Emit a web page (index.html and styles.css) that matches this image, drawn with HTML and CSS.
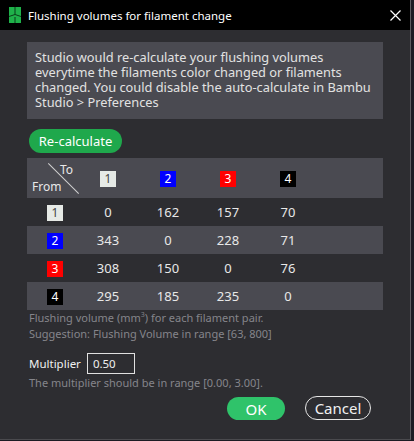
FILE: index.html
```html
<!DOCTYPE html>
<html lang="en">
<head>
  <meta charset="UTF-8" />
  <meta name="viewport" content="width=device-width, initial-scale=1.0"/>
  <title>Flushing volumes for filament change</title>
  <link rel="stylesheet" href="styles.css">
</head>
<body>

  <div class="dialog">
    <div class="titlebar">
      <svg class="logo" width="12" height="16" viewBox="0 0 12 16">
        <rect x="0" y="0" width="12" height="16" fill="#1fb24a"/>
        <path d="M0 9.5 L6 7.5 L12 9.5 M6 0 V7.5 M6 10 V16" stroke="#0b3d1a" stroke-width="1" fill="none"/>
      </svg>
      <span class="title">Flushing volumes for filament change</span>
      <svg class="close" width="11" height="11" viewBox="0 0 11 11">
        <path d="M0.5 0.5 L10.5 10.5 M10.5 0.5 L0.5 10.5" stroke="#fff" stroke-width="1.2"/>
      </svg>
    </div>

    <div class="content">
      <div class="info">
        Studio would re-calculate your flushing volumes everytime the filaments color changed or filaments changed. You could disable the auto-calculate in Bambu Studio &gt; Preferences
      </div>

      <button class="btn-recalc">Re-calculate</button>

      <div class="matrix">
        <div class="row head">
          <div class="cell corner">
            <span class="to">To</span>
            <span class="from">From</span>
          </div>
          <div class="cell"><span class="swatch c1">1</span></div>
          <div class="cell"><span class="swatch c2">2</span></div>
          <div class="cell"><span class="swatch c3">3</span></div>
          <div class="cell"><span class="swatch c4">4</span></div>
        </div>
        <div class="row">
          <div class="cell first"><span class="swatch c1">1</span></div>
          <div class="cell">0</div><div class="cell">162</div><div class="cell">157</div><div class="cell">70</div>
        </div>
        <div class="row alt">
          <div class="cell first"><span class="swatch c2">2</span></div>
          <div class="cell">343</div><div class="cell">0</div><div class="cell">228</div><div class="cell">71</div>
        </div>
        <div class="row">
          <div class="cell first"><span class="swatch c3">3</span></div>
          <div class="cell">308</div><div class="cell">150</div><div class="cell">0</div><div class="cell">76</div>
        </div>
        <div class="row alt">
          <div class="cell first"><span class="swatch c4">4</span></div>
          <div class="cell">295</div><div class="cell">185</div><div class="cell">235</div><div class="cell">0</div>
        </div>
      </div>

      <div class="note">
        Flushing volume (mm<sup>3</sup>) for each filament pair.<br>
        Suggestion: Flushing Volume in range [63, 800]
      </div>

      <div class="multiplier">
        <label for="mult">Multiplier</label>
        <input type="text" id="mult" value="0.50">
      </div>
      <div class="note range">The multiplier should be in range [0.00, 3.00].</div>

      <div class="actions">
        <button class="btn-ok">OK</button>
        <button class="btn-cancel">Cancel</button>
      </div>
    </div>
  </div>

</body>
</html>
```

FILE: styles.css
```css
body {
  margin: 0;
  background-color: #1c1c24;
  font-family: "Noto Sans", "Open Sans", sans-serif;
  color: #e6e6e6;
}

.dialog {
  width: 410px;
  height: 439px;
  background-color: #2d2d31;
  border-right: 1px solid #5c5c60;
  border-bottom: 1px solid #4a4a4e;
}

.titlebar {
  height: 30px;
  background-color: #000;
  display: flex;
  align-items: center;
  padding-left: 9px;
  padding-right: 9px;
}

.logo {
  flex: none;
}

.title {
  margin-left: 7px;
  font-family: "Noto Sans", sans-serif;
  font-size: 11.5px;
  color: #fff;
  flex: 1;
}

.close {
  flex: none;
}

.content {
  padding: 12px 27px 0 27px;
}

.info {
  background-color: #4a4a51;
  padding: 8px 4px 9px 8px;
  font-size: 12.8px;
  line-height: 15px;
  color: #e2e2e2;
}

.btn-recalc {
  margin: 10px 0 0 2px;
  height: 24px;
  width: 93px;
  border: none;
  border-radius: 12px;
  background-color: #1fa84c;
  color: #fff;
  font-family: "Noto Sans", sans-serif;
  font-size: 13px;
  padding: 0;
  display: block;
}

.matrix {
  margin-top: 5px;
}

.row {
  display: grid;
  grid-template-columns: 51px 60px 60px 60px 60px 1fr;
  height: 28px;
  align-items: center;
  font-size: 13px;
  color: #e8e8e8;
}

.row.head {
  height: 40px;
  background-color: #4a4a51;
}

.row.alt {
  background-color: #4a4a51;
}

.cell {
  text-align: center;
  line-height: 16px;
}

.cell.first {
  padding-left: 5px;
}

.swatch {
  display: inline-block;
  width: 16px;
  height: 16px;
  line-height: 16px;
  text-align: center;
  font-size: 12px;
  color: #fff;
  vertical-align: middle;
}

.c1 { background-color: #e6eae6; color: #444; }
.c2 { background-color: #0000ff; }
.c3 { background-color: #ff0000; }
.c4 { background-color: #000; }

.corner {
  position: relative;
  height: 40px;
  text-align: left;
}

.corner::after {
  content: "";
  position: absolute;
  left: 15px;
  top: 20px;
  width: 43px;
  height: 1px;
  background-color: #d0d0d0;
  transform: rotate(45deg);
}

.corner .to {
  position: absolute;
  left: 33px;
  top: 4px;
  font-size: 12px;
}

.corner .from {
  position: absolute;
  left: 5px;
  top: 21px;
  font-size: 12px;
}

.note {
  margin-left: 2px;
  font-size: 11px;
  line-height: 16px;
  color: #85858b;
}

.note sup {
  font-size: 7px;
  line-height: 0;
}

.multiplier {
  margin: 11px 0 0 2px;
  display: flex;
  align-items: center;
  gap: 6px;
  font-size: 11.5px;
  color: #f0f0f0;
}

.multiplier input {
  width: 41px;
  height: 19px;
  border: 1px solid #e0e0e0;
  background-color: #2d2d31;
  color: #f0f0f0;
  font-family: "Noto Sans", sans-serif;
  font-size: 11.5px;
  padding: 0 0 0 5px;
  box-sizing: content-box;
}

.note.range {
  margin-top: 1px;
}

.actions {
  margin-top: 5px;
  margin-right: 12px;
  display: flex;
  justify-content: flex-end;
  gap: 20px;
}

.btn-ok {
  width: 58px;
  height: 23px;
  border: none;
  border-radius: 12px;
  background-color: #2fc36a;
  color: #fff;
  font-family: "Noto Sans", sans-serif;
  font-size: 15px;
  padding: 0;
  margin-top: 1px;
}

.btn-cancel {
  width: 66px;
  height: 24px;
  border: 1px solid #e6e6e6;
  border-radius: 12px;
  background-color: transparent;
  color: #f0f0f0;
  font-family: "Noto Sans", sans-serif;
  font-size: 15px;
  padding: 0;
}
```
